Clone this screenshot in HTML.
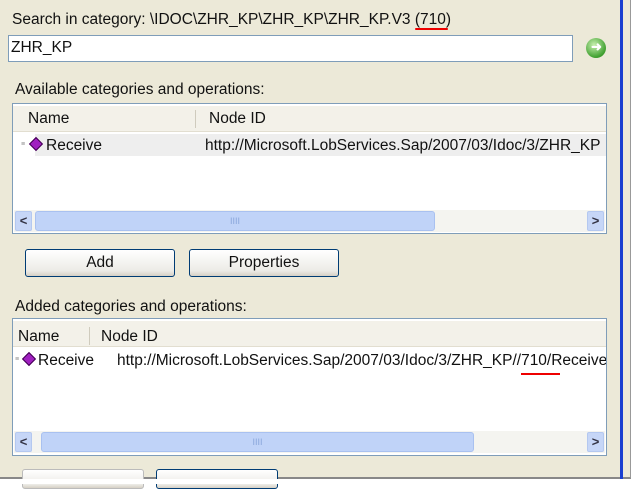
<!DOCTYPE html>
<html><head><meta charset="utf-8"><style>
*{margin:0;padding:0;box-sizing:border-box}
body{width:634px;height:484px;background:#fff;position:relative;overflow:hidden;font-family:"Liberation Sans",sans-serif;font-size:15.5px;color:#111}
.bg{position:absolute;left:0;top:0;width:631px;height:479px;background:#ece9d8;border-right:1px solid #999;border-bottom:2px solid #888}
.a{position:absolute;white-space:nowrap}
.list{position:absolute;left:12px;width:595px;background:#fff;border:1px solid #7f9db9;overflow:hidden}
.hdr{position:absolute;left:0;top:2px;width:100%;height:26px;background:#f3f1e9;border-bottom:1px solid #e2ded0}
.sep{position:absolute;top:4px;width:1px;height:18px;background:#cfcbbd}
.sb{position:absolute;left:1px;right:1px;height:22px;background:#f4f4f0}
.arr{position:absolute;top:1px;width:17px;height:20px;background:#c6d6f7;border:1px solid #b4c8f0;border-radius:2px;color:#334;font-size:13px;font-weight:bold;text-align:center;line-height:18px}
.thumb{position:absolute;top:1px;height:20px;background:#c0d3f8;border:1px solid #a9c1f0;border-radius:3px;color:#8aa6dc;font-size:9px;text-align:center;line-height:18px}
.btn{position:absolute;height:28px;border:1px solid #003c74;border-radius:3px;background:linear-gradient(#fff,#ecebe6 80%,#d6d0c5);text-align:center;line-height:26px}
.ico{position:absolute;width:10px;height:10px;background:#a020c0;transform:rotate(45deg);border:1px solid #400050}
</style></head><body>
<div class="bg"></div>
<div style="position:absolute;left:620px;top:0;width:3px;height:479px;background:#1a3fd0"></div>
<div class="a" style="left:12px;top:11px">Search in category: \IDOC\ZHR_KP\ZHR_KP\ZHR_KP.V3 (710)</div>
<div style="position:absolute;left:415px;top:28px;width:33px;height:2px;background:#e00;border-radius:1px"></div>
<div style="position:absolute;left:8px;top:35px;width:565px;height:27px;background:#fff;border:1px solid #7f9db9"></div>
<div class="a" style="left:11px;top:39px">ZHR_KP</div>
<div style="position:absolute;left:586px;top:38px;width:20px;height:20px;border-radius:50%;background:radial-gradient(circle at 40% 35%,#c8f0b0,#40a030 70%,#2a7a20);"></div>
<div class="a" style="left:591px;top:39px;color:#fff;font-size:13px;font-weight:bold">➜</div>
<div class="a" style="left:15px;top:81px">Available categories and operations:</div>
<div class="list" style="top:103px;height:131px">
 <div class="hdr"><span class="a" style="left:15px;top:4px">Name</span><div class="sep" style="left:182px"></div><span class="a" style="left:196px;top:4px">Node ID</span></div>
 <div style="position:absolute;left:22px;top:30px;width:575px;height:22px;background:#eeeeee"></div>
 <div class="a" style="left:8px;top:37px;font-size:7px;color:#888">≡</div>
 <div class="ico" style="left:18px;top:35px"></div>
 <div class="a" style="left:33px;top:33px">Receive</div>
 <div class="a" style="left:192px;top:33px">http://Microsoft.LobServices.Sap/2007/03/Idoc/3/ZHR_KP</div>
 <div class="sb" style="top:106px"><div class="arr" style="left:1px">&lt;</div><div class="thumb" style="left:21px;width:400px">IIII</div><div class="arr" style="right:1px">&gt;</div></div>
</div>
<div class="btn" style="left:25px;top:249px;width:150px">Add</div>
<div class="btn" style="left:189px;top:249px;width:150px">Properties</div>
<div class="a" style="left:15px;top:298px">Added categories and operations:</div>
<div class="list" style="top:318px;height:138px">
 <div class="hdr"><span class="a" style="left:5px;top:7px">Name</span><div class="sep" style="left:76px;top:6px"></div><span class="a" style="left:88px;top:7px">Node ID</span></div>
 <div class="a" style="left:2px;top:37px;font-size:7px;color:#888">≡</div>
 <div class="ico" style="left:11px;top:35px"></div>
 <div class="a" style="left:25px;top:33px">Receive</div>
 <div class="a" style="left:104px;top:33px">http://Microsoft.LobServices.Sap/2007/03/Idoc/3/ZHR_KP//710/Receive</div>
 <div style="position:absolute;left:508px;top:54px;width:39px;height:2px;background:#e00"></div>
 <div class="sb" style="top:112px"><div class="arr" style="left:1px">&lt;</div><div class="thumb" style="left:27px;width:433px">IIII</div><div class="arr" style="right:1px">&gt;</div></div>
</div>
<div class="btn" style="left:22px;top:469px;width:122px;border-color:#bbb;height:20px"></div>
<div class="btn" style="left:156px;top:469px;width:122px;height:20px"></div>
<div style="position:absolute;left:0;top:479px;width:634px;height:5px;background:#fff"></div>
</body></html>
